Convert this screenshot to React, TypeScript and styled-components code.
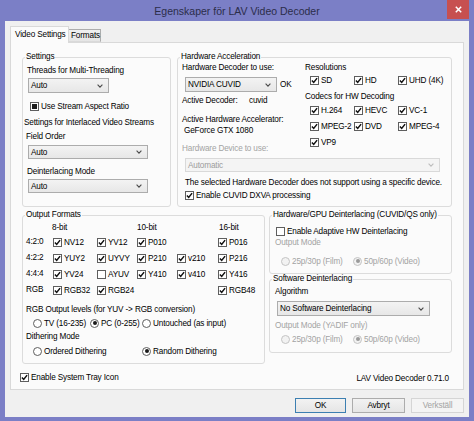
import React from 'react';
import styled, { createGlobalStyle } from 'styled-components';

const GlobalStyle = createGlobalStyle`
  html, body { margin: 0; padding: 0; }
  body { background: #7b7fc6; font-family: "Liberation Sans", Arial, sans-serif; }
  * { box-sizing: border-box; }
`;

const Window = styled.div`
  width: 474px;
  height: 421px;
  display: flex;
  flex-direction: column;
  background: #7b7fc6;
  overflow: hidden;
`;

const TitleBar = styled.div`
  height: 21px;
  flex: none;
  display: grid;
  grid-template-columns: 1fr auto 1fr;
  align-items: center;
`;

const Title = styled.div`
  grid-column: 2;
  font-size: 10.5px;
  color: #2b2d4a;
  white-space: nowrap;
  padding-top: 1px;
`;

const CloseButton = styled.div`
  grid-column: 3;
  justify-self: end;
  align-self: start;
  width: 22px;
  height: 19px;
  margin-right: 5px;
  background: #c75050;
  display: flex;
  align-items: center;
  justify-content: center;
`;

const Client = styled.div`
  flex: 1;
  margin: 0 5px 4px;
  background: #f0f0f0;
  padding: 5px 5px 0;
  display: flex;
  flex-direction: column;
  font-size: 8.2px;
  color: #000;
  letter-spacing: -0.15px;
`;

const TabStrip = styled.div`
  display: flex;
  align-items: flex-end;
  height: 16px;
  position: relative;
  z-index: 1;
`;

const Tab = styled.div<{ $active?: boolean; $w: number }>`
  width: ${(p) => p.$w}px;
  height: ${(p) => (p.$active ? 17 : 13)}px;
  margin-bottom: ${(p) => (p.$active ? -1 : 0)}px;
  border: 1px solid ${(p) => (p.$active ? '#d9d9d9' : '#acacac')};
  border-bottom: ${(p) => (p.$active ? 'none' : '1px solid #d9d9d9')};
  border-left: ${(p) => (p.$active ? '1px solid #d9d9d9' : 'none')};
  background: ${(p) => (p.$active ? '#fbfbfb' : 'linear-gradient(#f0f0f0, #e5e5e5)')};
  padding: 0 0 ${(p) => (p.$active ? 2 : 0)}px ${(p) => (p.$active ? 4 : 2)}px;
  display: flex;
  align-items: center;
  white-space: nowrap;
`;

const TabPanel = styled.div`
  height: 348px;
  border: 1px solid #d9d9d9;
  background: #fbfbfb;
  padding: 9px 11px 0;
  display: flex;
  flex-direction: column;
`;

const Row = styled.div<{ $cols: string; $gap: number; $h: number; $mt?: number }>`
  display: grid;
  grid-template-columns: ${(p) => p.$cols};
  column-gap: ${(p) => p.$gap}px;
  height: ${(p) => p.$h}px;
  margin-top: ${(p) => p.$mt ?? 0}px;
`;

const Column = styled.div<{ $gap?: number }>`
  display: flex;
  flex-direction: column;
  gap: ${(p) => p.$gap ?? 0}px;
  min-width: 0;
`;

const Group = styled.fieldset<{ $h: number }>`
  margin: 0;
  padding: 0;
  min-width: 0;
  height: ${(p) => p.$h}px;
  border: 1px solid #dcdcdc;
  border-radius: 3px;
`;

const Legend = styled.legend`
  padding: 0 1px;
  margin-left: 2px;
  line-height: 10px;
  font-size: 8.2px;
`;

const Stack = styled.div`
  display: flex;
  flex-direction: column;
  align-items: flex-start;
`;

const Text = styled.div<{ $mt?: number; $ml?: number; $mr?: number; $disabled?: boolean }>`
  margin-top: ${(p) => p.$mt ?? 0}px;
  margin-left: ${(p) => p.$ml ?? 0}px;
  margin-right: ${(p) => p.$mr ?? 0}px;
  line-height: 10px;
  height: 10px;
  white-space: nowrap;
  color: ${(p) => (p.$disabled ? '#a3a3a3' : 'inherit')};
`;

const KeyLabel = styled.span<{ $w: number }>`
  display: inline-block;
  width: ${(p) => p.$w}px;
`;

const InlineRow = styled.div<{ $mt?: number; $ml?: number; $gap?: number }>`
  display: flex;
  align-items: center;
  gap: ${(p) => p.$gap ?? 3}px;
  margin-top: ${(p) => p.$mt ?? 0}px;
  margin-left: ${(p) => p.$ml ?? 0}px;
`;

const Combo = styled.div<{ $w: number; $h?: number; $mt?: number; $ml?: number; $disabled?: boolean }>`
  width: ${(p) => p.$w}px;
  height: ${(p) => p.$h ?? 15}px;
  margin-top: ${(p) => p.$mt ?? 0}px;
  margin-left: ${(p) => p.$ml ?? 0}px;
  border: 1px solid ${(p) => (p.$disabled ? '#d9d9d9' : '#acacac')};
  background: ${(p) => (p.$disabled ? '#f4f4f4' : 'linear-gradient(#f3f3f3, #e7e7e7)')};
  color: ${(p) => (p.$disabled ? '#9c9c9c' : 'inherit')};
  display: flex;
  align-items: center;
  justify-content: space-between;
  padding: 0 5px 0 2px;
  white-space: nowrap;
  flex: none;
`;

const Chevron = ({ disabled }: { disabled?: boolean }) => (
  <svg width="6" height="4" viewBox="0 0 6 4">
    <path d="M0.6 0.6 L3 3.1 L5.4 0.6" fill="none" stroke={disabled ? '#bdbdbd' : '#4a4a4a'} strokeWidth="1.1" />
  </svg>
);

const CheckRow = styled.div<{ $mt?: number; $ml?: number }>`
  display: flex;
  align-items: center;
  gap: 2px;
  height: 10px;
  margin-top: ${(p) => p.$mt ?? 0}px;
  margin-left: ${(p) => p.$ml ?? 0}px;
  white-space: nowrap;
`;

const Box = styled.span`
  width: 9px;
  height: 9px;
  border: 1px solid #5e5e5e;
  background: #ffffff;
  display: flex;
  align-items: center;
  justify-content: center;
  flex: none;
`;

const MixedMark = styled.span`
  width: 5px;
  height: 5px;
  background: #1e1e1e;
`;

const RadioDot = styled.span<{ $checked?: boolean; $disabled?: boolean }>`
  width: 9px;
  height: 9px;
  border-radius: 50%;
  border: 1px solid ${(p) => (p.$disabled ? '#c4c4c4' : '#5e5e5e')};
  background: ${(p) => (p.$disabled ? '#f2f2f2' : '#ffffff')};
  display: flex;
  align-items: center;
  justify-content: center;
  flex: none;
  &::after {
    content: '';
    width: 4px;
    height: 4px;
    border-radius: 50%;
    background: ${(p) => (p.$checked ? (p.$disabled ? '#9a9a9a' : '#1a1a1a') : 'transparent')};
  }
`;

const RadioLabel = styled.span<{ $disabled?: boolean }>`
  color: ${(p) => (p.$disabled ? '#a3a3a3' : 'inherit')};
`;

const RadioRow = styled.div<{ $cols: string; $mt?: number; $ml?: number }>`
  display: grid;
  grid-template-columns: ${(p) => p.$cols};
  height: 10px;
  margin-top: ${(p) => p.$mt ?? 0}px;
  margin-left: ${(p) => p.$ml ?? 0}px;
`;

const OptionGrid = styled.div<{ $cols: string; $mt?: number; $ml?: number; $rowGap?: number }>`
  display: grid;
  grid-template-columns: ${(p) => p.$cols};
  grid-auto-rows: 10px;
  row-gap: ${(p) => p.$rowGap ?? 6}px;
  margin-top: ${(p) => p.$mt ?? 0}px;
  margin-left: ${(p) => p.$ml ?? 0}px;
`;

const BottomRow = styled.div`
  display: flex;
  justify-content: space-between;
  align-items: flex-start;
  margin-top: 8px;
`;

const Footer = styled.div`
  display: flex;
  justify-content: flex-end;
  gap: 6px;
  margin-top: 8px;
`;

const Button = styled.div<{ $w: number; $default?: boolean; $disabled?: boolean }>`
  width: ${(p) => p.$w}px;
  height: 15px;
  border: 1px solid ${(p) => (p.$default ? '#3c7fb1' : p.$disabled ? '#d5d5d5' : '#acacac')};
  background: ${(p) => (p.$disabled ? '#f4f4f4' : 'linear-gradient(#f2f2f2, #e5e5e5)')};
  color: ${(p) => (p.$disabled ? '#a3a3a3' : 'inherit')};
  display: flex;
  align-items: center;
  justify-content: center;
`;

const Tick = () => (
  <svg width="7" height="7" viewBox="0 0 7 7">
    <path d="M0.9 3.5 L2.7 5.4 L6.1 1.1" fill="none" stroke="#111" strokeWidth="1.5" />
  </svg>
);

type CheckProps = { label: string; checked?: boolean; mixed?: boolean; mt?: number; ml?: number };
const Check = ({ label, checked = true, mixed, mt, ml }: CheckProps) => (
  <CheckRow $mt={mt} $ml={ml}>
    <Box>{mixed ? <MixedMark /> : checked ? <Tick /> : null}</Box>
    <span>{label}</span>
  </CheckRow>
);

type RadioProps = { label: string; checked?: boolean; disabled?: boolean };
const Radio = ({ label, checked, disabled }: RadioProps) => (
  <CheckRow>
    <RadioDot $checked={checked} $disabled={disabled} />
    <RadioLabel $disabled={disabled}>{label}</RadioLabel>
  </CheckRow>
);

const Select = ({ value, w, h, mt, ml, disabled }: { value: string; w: number; h?: number; mt?: number; ml?: number; disabled?: boolean }) => (
  <Combo $w={w} $h={h} $mt={mt} $ml={ml} $disabled={disabled}>
    <span>{value}</span>
    <Chevron disabled={disabled} />
  </Combo>
);

const formatCols = '27px 44px 40px 40px 41px 1fr';

type Cell = { l: string; c?: boolean } | null;
const formatRows: { name: string; cells: Cell[] }[] = [
  { name: '4:2:0', cells: [{ l: 'NV12' }, { l: 'YV12' }, { l: 'P010' }, null, { l: 'P016' }] },
  { name: '4:2:2', cells: [{ l: 'YUY2' }, { l: 'UYVY' }, { l: 'P210' }, { l: 'v210' }, { l: 'P216' }] },
  { name: '4:4:4', cells: [{ l: 'YV24' }, { l: 'AYUV', c: false }, { l: 'Y410' }, { l: 'v410' }, { l: 'Y416' }] },
  { name: 'RGB', cells: [{ l: 'RGB32' }, { l: 'RGB24' }, null, null, { l: 'RGB48' }] },
];

const CloseIcon = () => (
  <svg width="7" height="7" viewBox="0 0 7 7">
    <path d="M0.8 0.8 L6.2 6.2 M6.2 0.8 L0.8 6.2" stroke="#fff" strokeWidth="1.5" />
  </svg>
);

export default function App() {
  return (
    <>
      <GlobalStyle />
      <Window>
        <TitleBar>
          <Title>Egenskaper för LAV Video Decoder</Title>
          <CloseButton>
            <CloseIcon />
          </CloseButton>
        </TitleBar>
        <Client>
          <TabStrip>
            <Tab $active $w={59}>Video Settings</Tab>
            <Tab $w={32}>Formats</Tab>
          </TabStrip>
          <TabPanel>
            <Row $cols="149px 275px" $gap={6} $h={155}>
              <Group $h={155}>
                <Legend>Settings</Legend>
                <Stack>
                  <Text $mt={4} $ml={4}>Threads for Multi-Threading</Text>
                  <Select value="Auto" w={81} mt={2} ml={5} />
                  <Check label="Use Stream Aspect Ratio" mixed mt={8} ml={7} />
                  <Text $mt={7} $ml={1}>Settings for Interlaced Video Streams</Text>
                  <Text $mt={4} $ml={3}>Field Order</Text>
                  <Select value="Auto" w={120} h={14} mt={3} ml={5} />
                  <Text $mt={8} $ml={4}>Deinterlacing Mode</Text>
                  <Select value="Auto" w={120} h={14} mt={2} ml={5} />
                </Stack>
              </Group>
              <Group $h={155}>
                <Legend>Hardware Acceleration</Legend>
                <Stack>
                  <Row $cols="127px 1fr" $gap={0} $h={85}>
                    <Stack>
                      <Text $mt={1} $ml={4}>Hardware Decoder to use:</Text>
                      <InlineRow $mt={4} $ml={7}>
                        <Select value="NVIDIA CUVID" w={92} />
                        <span>OK</span>
                      </InlineRow>
                      <Text $mt={4} $ml={4}>
                        <KeyLabel $w={67}>Active Decoder:</KeyLabel>cuvid
                      </Text>
                      <Text $mt={9} $ml={4}>Active Hardware Accelerator:</Text>
                      <Text $mt={1} $ml={6}>GeForce GTX 1080</Text>
                    </Stack>
                    <Stack>
                      <Text $mt={1}>Resolutions</Text>
                      <OptionGrid $cols="repeat(3, 44px)" $mt={2} $ml={5}>
                        <Check label="SD" />
                        <Check label="HD" />
                        <Check label="UHD (4K)" />
                      </OptionGrid>
                      <Text $mt={7}>Codecs for HW Decoding</Text>
                      <OptionGrid $cols="repeat(3, 44px)" $mt={3} $ml={5}>
                        <Check label="H.264" />
                        <Check label="HEVC" />
                        <Check label="VC-1" />
                        <Check label="MPEG-2" />
                        <Check label="DVD" />
                        <Check label="MPEG-4" />
                        <Check label="VP9" />
                      </OptionGrid>
                    </Stack>
                  </Row>
                  <Text $mt={-3} $ml={4} $disabled>Hardware Device to use:</Text>
                  <Select value="Automatic" w={255} h={14} mt={4} ml={7} disabled />
                  <Text $mt={6} $ml={7}>The selected Hardware Decoder does not support using a specific device.</Text>
                  <Check label="Enable CUVID DXVA processing" mt={2} ml={7} />
                </Stack>
              </Group>
            </Row>
            <Row $cols="243px 183px" $gap={4} $h={154} $mt={3}>
              <Group $h={154}>
                <Legend>Output Formats</Legend>
                <Stack>
                  <OptionGrid $cols={formatCols} $mt={3} $ml={3}>
                    <span />
                    <Text $ml={-1}>8-bit</Text>
                    <span />
                    <Text>10-bit</Text>
                    <span />
                    <Text $ml={1}>16-bit</Text>
                  </OptionGrid>
                  <OptionGrid $cols={formatCols} $mt={4} $ml={3}>
                    {formatRows.map((r) => (
                      <React.Fragment key={r.name}>
                        <Text>{r.name}</Text>
                        {r.cells.map((c, i) =>
                          c ? <Check key={i} label={c.l} checked={c.c !== false} /> : <span key={i} />
                        )}
                      </React.Fragment>
                    ))}
                  </OptionGrid>
                  <Text $mt={10} $ml={3}>RGB Output levels (for YUV -&gt; RGB conversion)</Text>
                  <RadioRow $cols="57px 52px auto" $mt={3} $ml={10}>
                    <Radio label="TV (16-235)" />
                    <Radio label="PC (0-255)" checked />
                    <Radio label="Untouched (as input)" />
                  </RadioRow>
                  <Text $mt={4} $ml={3}>Dithering Mode</Text>
                  <RadioRow $cols="109px auto" $mt={4} $ml={10}>
                    <Radio label="Ordered Dithering" />
                    <Radio label="Random Dithering" checked />
                  </RadioRow>
                </Stack>
              </Group>
              <Column>
                <Group $h={64}>
                  <Legend>Hardware/GPU Deinterlacing (CUVID/QS only)</Legend>
                  <Stack>
                    <Check label="Enable Adaptive HW Deinterlacing" checked={false} mt={6} ml={6} />
                    <Text $mt={2} $ml={5} $disabled>Output Mode</Text>
                    <RadioRow $cols="72px auto" $mt={8} $ml={11}>
                      <Radio label="25p/30p (Film)" disabled />
                      <Radio label="50p/60p (Video)" checked disabled />
                    </RadioRow>
                  </Stack>
                </Group>
                <Group $h={79}>
                  <Legend>Software Deinterlacing</Legend>
                  <Stack>
                    <Text $mt={3} $ml={5}>Algorithm</Text>
                    <Select value="No Software Deinterlacing" w={153} mt={4} ml={7} />
                    <Text $mt={5} $ml={5} $disabled>Output Mode (YADIF only)</Text>
                    <RadioRow $cols="72px auto" $mt={3} $ml={11}>
                      <Radio label="25p/30p (Film)" disabled />
                      <Radio label="50p/60p (Video)" checked disabled />
                    </RadioRow>
                  </Stack>
                </Group>
              </Column>
            </Row>
            <BottomRow>
              <Check label="Enable System Tray Icon" ml={-2} />
              <Text $mt={2} $mr={3}>LAV Video Decoder 0.71.0</Text>
            </BottomRow>
          </TabPanel>
          <Footer>
            <Button $w={51} $default>OK</Button>
            <Button $w={53}>Avbryt</Button>
            <Button $w={53} $disabled>Verkställ</Button>
          </Footer>
        </Client>
      </Window>
    </>
  );
}
